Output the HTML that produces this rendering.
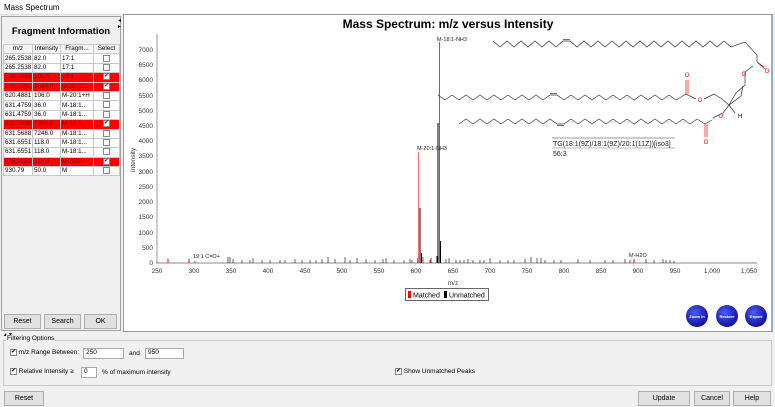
<!DOCTYPE html>
<html><head><meta charset="utf-8">
<style>
*{box-sizing:border-box;margin:0;padding:0}
body{width:775px;height:407px;overflow:hidden;background:#f0f0f0;font-family:"Liberation Sans",sans-serif;font-size:8px;color:#000;position:relative}
.abs{position:absolute}
.btn{position:absolute;border:1px solid #adadad;background:#e1e1e1;font-size:7px;text-align:center;line-height:13px;height:15px}
table{border-collapse:collapse;font-size:6.3px}
td,th{border:1px solid #c8c8c8;height:9.4px;line-height:8px;padding:0 1px;white-space:nowrap;overflow:hidden;font-weight:normal;text-align:left}
th{text-align:center;background:#f4f4f4}
tr.r td{background:#f00;color:#800}
.cb{display:inline-block;width:7px;height:7px;border:1px solid #888;background:#fff;vertical-align:middle;font-size:6px;line-height:5px;text-align:center}
.f{font-size:6.5px}
</style></head><body>
<div class="abs" style="left:0;top:0;width:775px;height:15px;background:#fff;border-bottom:1px solid #ddd"></div>
<div class="abs" style="left:4px;top:3px;font-size:8px">Mass Spectrum</div>

<div class="abs" style="left:1px;top:16px;width:120px;height:315px;border:1px solid #a0a0a0;background:#f0f0f0"></div>
<div class="abs" style="left:0;top:26px;width:122px;text-align:center;font-weight:bold;font-size:9.5px">Fragment Information</div>
<div class="abs" style="left:3px;top:44px;width:116px;height:132px;background:#fff"></div>
<table class="abs" style="left:3px;top:44px;width:116px;table-layout:fixed;background:#fff">
<colgroup><col style="width:29px"><col style="width:28px"><col style="width:33px"><col style="width:26px"></colgroup>
<tr><th>m/z</th><th>Intensity</th><th>Fragm...</th><th>Select</th></tr>
<tr><td>265.2538</td><td>82.0</td><td>17:1</td><td style="text-align:center"><span class="cb"></span></td></tr>
<tr><td>265.2538</td><td>82.0</td><td>17:1</td><td style="text-align:center"><span class="cb"></span></td></tr>
<tr class="r"><td>293.2856</td><td>102.0</td><td>19:1</td><td style="text-align:center"><span class="cb">✔</span></td></tr>
<tr class="r"><td>603.5381</td><td>3644.0</td><td>M-20:1...</td><td style="text-align:center"><span class="cb">✔</span></td></tr>
<tr><td>620.4881</td><td>106.0</td><td>M-20:1+H</td><td style="text-align:center"><span class="cb"></span></td></tr>
<tr><td>631.4759</td><td>36.0</td><td>M-18:1...</td><td style="text-align:center"><span class="cb"></span></td></tr>
<tr><td>631.4759</td><td>36.0</td><td>M-18:1...</td><td style="text-align:center"><span class="cb"></span></td></tr>
<tr class="r"><td>631.5688</td><td>7246.0</td><td>M-18:1...</td><td style="text-align:center"><span class="cb">✔</span></td></tr>
<tr><td>631.5688</td><td>7246.0</td><td>M-18:1...</td><td style="text-align:center"><span class="cb"></span></td></tr>
<tr><td>631.6551</td><td>118.0</td><td>M-18:1...</td><td style="text-align:center"><span class="cb"></span></td></tr>
<tr><td>631.6551</td><td>118.0</td><td>M-18:1...</td><td style="text-align:center"><span class="cb"></span></td></tr>
<tr class="r"><td>895.8122</td><td>118.0</td><td>M-H2O</td><td style="text-align:center"><span class="cb">✔</span></td></tr>
<tr><td>930.79</td><td>50.0</td><td>M</td><td style="text-align:center"><span class="cb"></span></td></tr>
</table>
<div class="btn" style="left:4px;top:314px;width:37px">Reset</div>
<div class="btn" style="left:44px;top:314px;width:37px">Search</div>
<div class="btn" style="left:84px;top:314px;width:33px">OK</div>
<div class="abs" style="left:118px;top:18px;font-size:6px;line-height:6px">◂<br>▸</div>

<div class="abs" style="left:123px;top:14px;width:650px;height:318px;background:#fff;border:1px solid #999;border-right:2px solid #8fb0d0"></div>
<div class="abs" style="left:123px;top:17px;width:650px;text-align:center;font-weight:bold;font-size:12px">Mass Spectrum: m/z versus Intensity</div>

<svg class="abs" style="left:0;top:0" width="775" height="407" font-family="Liberation Sans" font-size="6.5">
<line x1="157" y1="34" x2="157" y2="263" stroke="#ccc" stroke-width="2"/>
<line x1="156" y1="263" x2="757" y2="263" stroke="#888" stroke-width="1"/>
<g text-anchor="end" fill="#333">
<text x="153" y="52">7000</text><text x="153" y="67">6500</text><text x="153" y="82">6000</text><text x="153" y="98">5500</text><text x="153" y="113">5000</text><text x="153" y="128">4500</text><text x="153" y="143">4000</text><text x="153" y="158">3500</text><text x="153" y="174">3000</text><text x="153" y="189">2500</text><text x="153" y="204">2000</text><text x="153" y="219">1500</text><text x="153" y="235">1000</text><text x="153" y="250">500</text><text x="153" y="265">0</text>
</g>
<text x="135" y="160" transform="rotate(-90 135 160)" text-anchor="middle" fill="#333">Intensity</text>
<g text-anchor="middle" fill="#333">
<text x="157" y="273">250</text><text x="194" y="273">300</text><text x="231" y="273">350</text><text x="268" y="273">400</text><text x="305" y="273">450</text><text x="342" y="273">500</text><text x="379" y="273">550</text><text x="416" y="273">600</text><text x="453" y="273">650</text><text x="490" y="273">700</text><text x="527" y="273">750</text><text x="564" y="273">800</text><text x="601" y="273">850</text><text x="638" y="273">900</text><text x="675" y="273">950</text><text x="712" y="273">1,000</text><text x="749" y="273">1,050</text>
<text x="453" y="285">m/z</text>
</g>
<g stroke="#000" stroke-width="0.6">
<path d="M228 263v-6M230 263v-6M233 263v-4M242 263v-3M250 263v-3M253 263v-5M262 263v-3M270 263v-3M280 263v-3M285 263v-3M295 263v-4M302 263v-3M310 263v-3M316 263v-3M322 263v-4M328 263v-6M335 263v-4M345 263v-6M357 263v-5M366 263v-4M375 263v-3M383 263v-4M386 263v-5M394 263v-3M404 263v-3M410 263v-4M412 263v-3M420 263v-4M423 263v-6M430 263v-3M446 263v-4M449 263v-5M456 263v-3M460 263v-3M464 263v-3M468 263v-4M473 263v-3M480 263v-3M484 263v-3M490 263v-5M500 263v-3M508 263v-3M514 263v-3M525 263v-4M531 263v-6M537 263v-5M541 263v-5M545 263v-3M554 263v-3M561 263v-3M578 263v-4M590 263v-3M605 263v-3M613 263v-3M625 263v-4M630 263v-3M646 263v-4M654 263v-3M663 263v-4M666 263v-3M670 263v-3M674 263v-2M195 263v-2M350 263v-3"/>
<path d="M420 263v-55M421.5 263v-10M438 263v-140M440.5 263v-22M437 263v-7M418 263v-5" stroke-width="1"/>
</g>
<g stroke="#f00" stroke-width="1">
<line x1="168" y1="263" x2="168" y2="259"/><line x1="189" y1="263" x2="189" y2="259"/>
<line x1="418.5" y1="152" x2="418.5" y2="263" stroke="#f66"/>
<line x1="439.5" y1="42" x2="439.5" y2="263" stroke="#e33"/>
<line x1="431" y1="263" x2="431" y2="258"/><line x1="634" y1="263" x2="634" y2="259"/>
</g>
<g fill="#222" font-size="5.5">
<text x="437" y="41">M-18:1-NH3</text>
<text x="417" y="150">M-20:1-NH3</text>
<text x="193" y="258">19:1 C=O+</text>
<text x="629" y="257">M-H2O</text>
</g>
<g fill="none" stroke="#333" stroke-width="0.7">
<polyline points="493,41 500,47 507,41 514,47 521,41 528,47 535,41 542,47 549,41 556,47 563,41 570,41 577,47 584,41 591,47 598,41 605,47 612,41 619,47 626,41 633,47 640,41 647,47 654,41 661,47 668,41 675,47 682,41 689,47 696,41 703,47 710,41 717,47 724,41 731,47 745,42 757,55 757,62"/>
<line x1="570" y1="39.5" x2="563" y2="39.5"/>
<polyline points="757,62 764,67"/><line x1="758" y1="63" x2="765" y2="69" stroke="#f00"/>
<polyline points="753,66 745,72 745,85 736,93 729,105"/>
<polyline points="438,95 445,100 452,95 459,100 466,95 473,100 480,95 487,100 494,95 501,100 508,95 515,100 522,95 529,100 536,95 543,100 550,95 557,95 564,100 571,95 578,100 585,95 592,100 599,95 606,100 613,95 620,100 627,95 634,100 641,95 648,100 655,95 662,100 669,95 676,100 686,94 696,99"/>
<line x1="550" y1="93.5" x2="557" y2="93.5"/>
<line x1="686" y1="94" x2="686" y2="80" stroke="#f00"/><line x1="688" y1="94" x2="688" y2="80" stroke="#f00"/>
<polyline points="704,99 714,94 722,99 729,105 741,96 743,86"/>
<polyline points="729,105 723,113 713,118"/>
<line x1="729" y1="105" x2="735" y2="113"/>
<polyline points="459,124 466,119 473,124 480,119 487,124 494,119 501,124 508,119 515,124 522,119 529,124 536,119 543,124 550,119 557,124 564,124 571,119 578,124 585,119 592,124 599,119 606,124 613,119 620,124 627,119 634,124 641,119 648,124 655,119 662,124 669,119 676,124 683,119 690,124 697,119 705,124 712,120"/>
<line x1="557" y1="125.5" x2="564" y2="125.5"/>
<line x1="705" y1="124" x2="705" y2="137" stroke="#f00"/><line x1="707" y1="124" x2="707" y2="137" stroke="#f00"/>
</g>
<g fill="#f00" font-size="6" text-anchor="middle">
<text x="767" y="73">O</text><text x="744" y="76">O</text><text x="687" y="77">O</text><text x="700" y="102">O</text><text x="721" y="118">O</text><text x="706" y="144">O</text>
</g>
<text x="738" y="118" font-size="6">H</text>
<line x1="552" y1="138" x2="675" y2="138" stroke="#999"/>
<line x1="552" y1="148" x2="675" y2="148" stroke="#bbb"/>
<text x="553" y="146" font-size="7" fill="#222">TG(18:1(9Z)/18:1(9Z)/20:1(11Z))[iso3]</text>
<text x="553" y="156" font-size="7" fill="#222">56:3</text>
<rect x="405.5" y="288.5" width="83" height="12" fill="#fff" stroke="#666"/>
<rect x="408" y="291" width="3" height="7" fill="#f00"/>
<text x="413" y="297.5" font-size="7">Matched</text>
<rect x="444" y="291" width="3" height="7" fill="#000"/>
<text x="449" y="297.5" font-size="7">Unmatched</text>
<defs><radialGradient id="g" cx="40%" cy="35%" r="65%"><stop offset="0" stop-color="#4a5cf0"/><stop offset="1" stop-color="#1010a0"/></radialGradient></defs>
<g font-size="4" fill="#fff" text-anchor="middle" font-weight="bold">
<circle cx="697" cy="316" r="11" fill="url(#g)"/><text x="697" y="318">Zoom In</text>
<circle cx="727" cy="316" r="11" fill="url(#g)"/><text x="727" y="318">Restore</text>
<circle cx="756" cy="316" r="11" fill="url(#g)"/><text x="756" y="318">Export</text>
</g>
</svg>

<div class="abs" style="left:3px;top:332px;font-size:5px">▲▼</div>
<div class="abs" style="left:3px;top:340px;width:769px;height:46px;border:1px solid #c8c8c8"></div>
<div class="abs f" style="left:6px;top:335px;background:#f0f0f0;padding:0 1px">Filtering Options</div>
<div class="abs f" style="left:10px;top:349px"><span class="cb">✔</span> m/z Range Between:</div>
<div class="abs f" style="left:83px;top:348px;width:41px;height:11px;background:#fff;border:1px solid #aaa;padding-left:2px">250</div>
<div class="abs f" style="left:129px;top:350px">and</div>
<div class="abs f" style="left:145px;top:348px;width:39px;height:11px;background:#fff;border:1px solid #aaa;padding-left:2px">950</div>
<div class="abs f" style="left:10px;top:368px"><span class="cb">✔</span> Relative Intensity ≥</div>
<div class="abs f" style="left:81px;top:367px;width:16px;height:11px;background:#fff;border:1px solid #aaa;padding-left:2px">0</div>
<div class="abs f" style="left:102px;top:369px">% of maximum intensity</div>
<div class="abs f" style="left:395px;top:368px"><span class="cb">✔</span> Show Unmatched Peaks</div>
<div class="btn" style="left:4px;top:391px;width:40px">Reset</div>
<div class="btn" style="left:638px;top:391px;width:52px">Update</div>
<div class="btn" style="left:694px;top:391px;width:36px">Cancel</div>
<div class="btn" style="left:733px;top:391px;width:38px">Help</div>
</body></html>
